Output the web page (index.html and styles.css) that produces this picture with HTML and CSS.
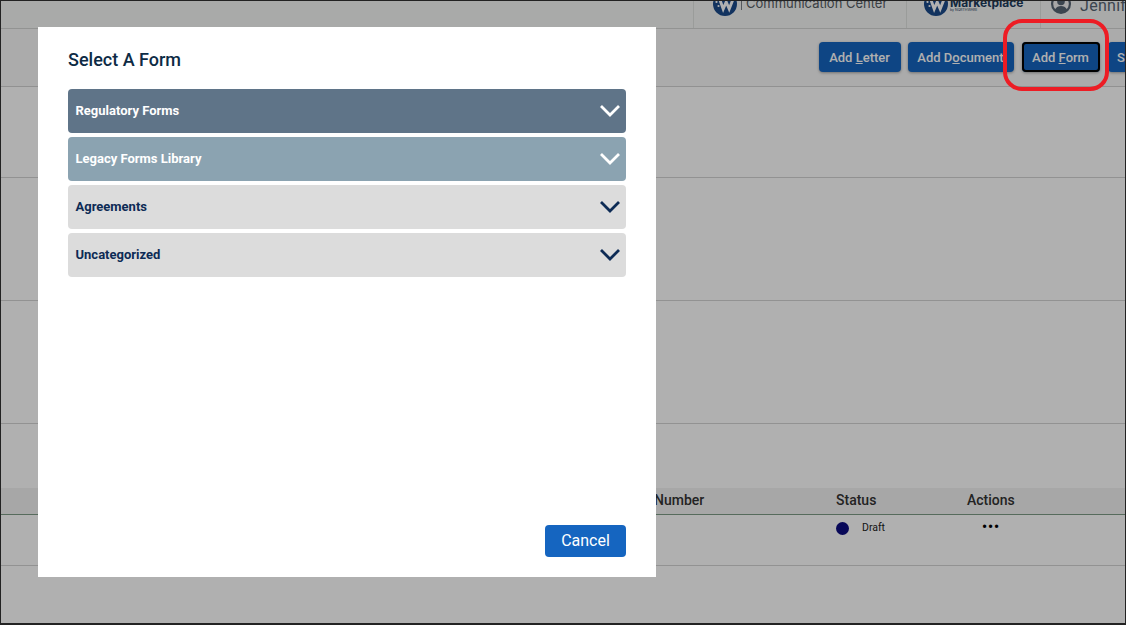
FILE: index.html
```html
<!DOCTYPE html>
<html lang="en">
<head>
<meta charset="utf-8">
<title>Select A Form</title>
<link rel="stylesheet" href="styles.css">
</head>
<body>
<div class="frame">
  <header class="topbar">
    <div class="top-cell cell-comm">
      <svg class="logo" viewBox="0 0 24 24"><circle cx="12" cy="12" r="12" fill="#1b4a8a"/><path d="M7 8l3.200 9 3-7 3 7 4.300-11" fill="none" stroke="#fff" stroke-width="2.900"/><circle cx="3.500" cy="10" r="1.100" fill="#fff"/><circle cx="5.500" cy="14" r="1.100" fill="#fff"/></svg>
      <span class="logo-rule"></span>
      <span class="comm-text">Communication Center</span>
    </div>
    <div class="top-cell cell-market">
      <svg class="logo" viewBox="0 0 24 24"><circle cx="12" cy="12" r="12" fill="#1b4a8a"/><path d="M7 8l3.200 9 3-7 3 7 4.300-11" fill="none" stroke="#fff" stroke-width="2.900"/><circle cx="3.500" cy="10" r="1.100" fill="#fff"/><circle cx="5.500" cy="14" r="1.100" fill="#fff"/></svg>
      <span class="market-text">Marketplace<small class="market-by">by NORTHWARE</small></span>
    </div>
    <div class="top-cell cell-user">
      <svg class="avatar" viewBox="0 0 20 20"><circle cx="10" cy="10" r="10" fill="#566473"/><circle cx="10" cy="10" r="7.800" fill="#f2f2f2"/><circle cx="10" cy="7.500" r="3.800" fill="#566473"/><path d="M3.800 15.800c1.500-3 3.800-3.800 6.200-3.800s4.700.8 6.200 3.800c-1.600 1.800-3.800 2.700-6.200 2.700s-4.600-.9-6.200-2.700z" fill="#566473"/></svg>
      <span class="user-name">Jennifer</span>
    </div>
  </header>

  <div class="toolbar">
    <button class="tool-btn btn-letter">Add <u>L</u>etter</button>
    <button class="tool-btn btn-doc">Add D<u>o</u>cument</button>
    <button class="tool-btn btn-form">Add <u>F</u>orm</button>
    <button class="tool-btn btn-save">Save</button>
  </div>

  <div class="section sec-a"></div>
  <div class="section sec-b"></div>
  <div class="section sec-b"></div>

  <div class="table">
    <div class="t-row t-head">
      <span></span>
      <span>Number</span>
      <span>Status</span>
      <span>Actions</span>
    </div>
    <div class="t-row t-body">
      <span></span>
      <span></span>
      <span class="status-cell"><i class="dot"></i><span class="draft">Draft</span></span>
      <span class="more">•••</span>
    </div>
  </div>

  <div class="backdrop"></div>

  <div class="annotation"></div>

  <div class="modal">
    <h2 class="modal-title">Select A Form</h2>
    <div class="accordion">
      <div class="acc acc-dark"><span>Regulatory Forms</span><svg class="chev" viewBox="0 0 20 12"><path d="M1 1l9 9 9-9"/></svg></div>
      <div class="acc acc-mid"><span>Legacy Forms Library</span><svg class="chev" viewBox="0 0 20 12"><path d="M1 1l9 9 9-9"/></svg></div>
      <div class="acc acc-light"><span>Agreements</span><svg class="chev" viewBox="0 0 20 12"><path d="M1 1l9 9 9-9"/></svg></div>
      <div class="acc acc-light"><span>Uncategorized</span><svg class="chev" viewBox="0 0 20 12"><path d="M1 1l9 9 9-9"/></svg></div>
    </div>
    <div class="modal-foot"><button class="cancel">Cancel</button></div>
  </div>
</div>
</body>
</html>
```
FILE: styles.css
```css
* { box-sizing: border-box; }
html, body { margin: 0; height: 100%; overflow: hidden; }
body { font-family: Roboto, "Liberation Sans", sans-serif; background: #fff; }

.frame {
  position: relative;
  width: 1126px;
  height: 625px;
  border: 1px solid #222;
  border-bottom-width: 2px;
  overflow: hidden;
  background: #fff;
  display: flex;
  flex-direction: column;
}

.topbar {
  flex: none;
  height: 28px;
  display: flex;
  justify-content: flex-end;
  border-bottom: 1px solid #d4d6d4;
  background: #f5f7f5;
  overflow: hidden;
}
.top-cell {
  display: flex;
  align-items: center;
  height: 27px;
  border-left: 1px solid #e0e2e0;
  position: relative;
}
.cell-comm { width: 213px; padding-left: 19px; }
.cell-market { width: 134px; padding-left: 17px; }
.cell-user { width: 85px; padding-left: 10px; }
.logo { flex: none; width: 24px; height: 24px; margin-top: -21px; }
.logo-rule { width: 1px; height: 14px; background: #7b8288; margin: -24px 0 0 4px; }
.comm-text {
  font-family: Inter, sans-serif;
  font-size: 13px;
  color: #555c64;
  white-space: nowrap;
  margin: -24px 0 0 4px;
}
.market-text {
  font-family: Inter, sans-serif;
  font-weight: 700;
  font-size: 12px;
  color: #1b3a5c;
  margin: -20px 0 0 2px;
  display: flex;
  flex-direction: column;
  line-height: 11px;
}
.market-by { font-size: 3.500px; line-height: 4px; font-weight: 400; }
.avatar { flex: none; width: 20px; height: 20px; margin-top: -21px; }
.user-name {
  font-size: 16px;
  letter-spacing: .3px;
  color: #566473;
  margin: -19px 0 0 9px;
  white-space: nowrap;
}

.toolbar {
  flex: none;
  height: 58px;
  display: flex;
  gap: 7px;
  padding: 13px 0 0 818px;
  border-bottom: 1px solid #d2d2d2;
  background: #f8f8f8;
  overflow: hidden;
}
.tool-btn {
  flex: none;
  height: 30px;
  border: 0;
  border-radius: 4px;
  background: #1565c0;
  color: #fff;
  font: 500 13px Roboto, sans-serif;
  padding: 0 1px 0 0;
  box-shadow: 0 1px 3px rgba(0, 0, 0, .35);
}
.btn-letter { width: 82px; }
.btn-doc { width: 106px; }
.btn-form { width: 78px; margin-left: 1px; outline: 2px solid #000; outline-offset: -2px; }
.btn-save { width: 60px; margin-left: 1px; padding-left: 9px; text-align: left; }

.section { flex: none; border-bottom: 1px solid #d4d4d4; }
.sec-a { height: 91px; }
.sec-b { height: 123px; }

.table { flex: none; margin-top: 64px; }
.t-row { display: grid; grid-template-columns: 653px 182px 131px 1fr; }
.t-head {
  height: 27px;
  align-items: center;
  background: #f2f2f2;
  border-bottom: 1px solid #7d9c86;
  padding-bottom: 2px;
  font-weight: 500;
  font-size: 14px;
  line-height: 20px;
  color: #333;
}
.t-body {
  height: 51px;
  border-bottom: 1px solid #d4d4d4;
  padding-top: 6px;
  align-items: start;
}
.status-cell { display: flex; align-items: flex-start; }
.dot { flex: none; width: 13px; height: 13px; margin-top: 1px; border-radius: 50%; background: #0d0d80; }
.draft { font-size: 10.500px; margin-left: 13px; color: #222; line-height: 13px; }
.more { font-size: 14px; line-height: 13px; padding-left: 15px; color: #000; letter-spacing: 1px; font-weight: 700; }

.backdrop {
  position: absolute;
  inset: 0;
  background: rgba(0, 0, 0, .31);
}

.annotation {
  position: absolute;
  left: 1002px;
  top: 18px;
  width: 106px;
  height: 72px;
  border: 4px solid #ed1c24;
  border-radius: 19px;
}

.modal {
  position: absolute;
  left: 37px;
  top: 26px;
  width: 618px;
  height: 550px;
  background: #fff;
  padding: 22px 30px 20px;
  display: flex;
  flex-direction: column;
}
.modal-title {
  margin: 0 0 19px;
  font-size: 18px;
  font-weight: 500;
  line-height: 21px;
  color: #0d2b45;
}
.accordion { display: flex; flex-direction: column; gap: 4px; }
.acc {
  height: 44px;
  border-radius: 4px;
  display: flex;
  align-items: center;
  justify-content: space-between;
  padding: 0 6px 0 7.500px;
  font-size: 13px;
  font-weight: 700;
}
.acc span { margin-top: -2px; }
.acc-dark { background: #5f7488; color: #fff; }
.acc-mid { background: #8ba3b1; color: #fff; }
.acc-light { background: #dcdcdc; color: #0d2b55; }
.chev { width: 20px; height: 12px; fill: none; stroke: currentColor; stroke-width: 2.800px; }
.modal-foot { margin-top: auto; display: flex; justify-content: flex-end; }
.cancel {
  width: 81px;
  height: 32px;
  border: 0;
  border-radius: 4px;
  background: #1565c0;
  color: #fff;
  font: 400 16px Roboto, sans-serif;
  padding: 0 0 2px;
}
```
